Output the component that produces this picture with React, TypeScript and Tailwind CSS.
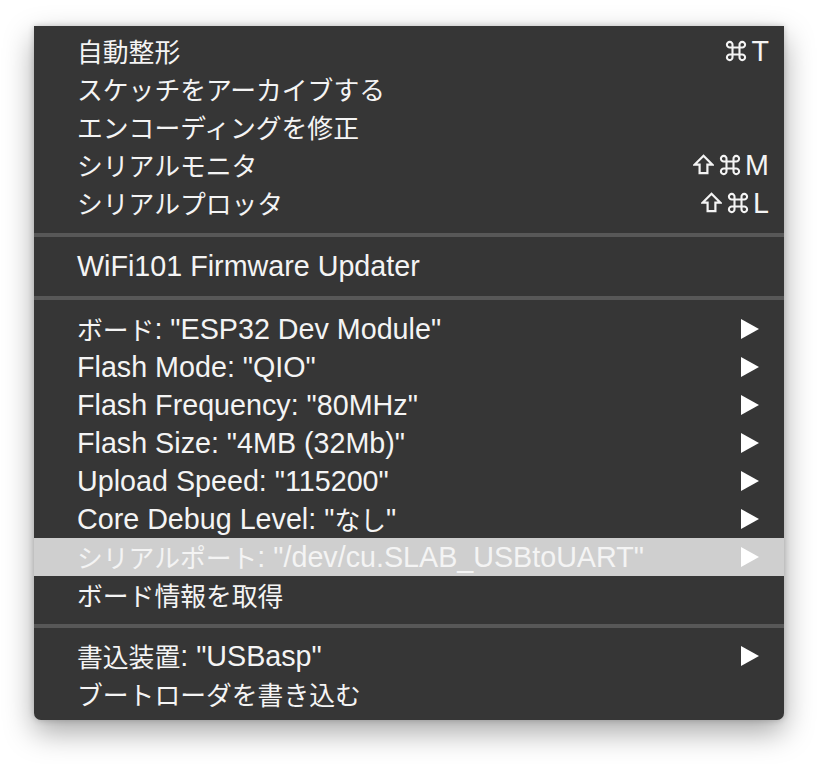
import React from "react";

const LAT = "font-['Liberation_Sans',Arial,sans-serif] text-[28.7px]";
const JP = "font-['Noto_Sans_CJK_JP',sans-serif] text-[25.8px]";

type Seg = { t: string; j?: boolean };
type Item =
  | { kind: "sep"; h: string }
  | { kind: "item"; segs: Seg[]; shortcut?: string; arrow?: boolean; hl?: boolean };

const j = (t: string): Seg => ({ t, j: true });
const l = (t: string): Seg => ({ t });

const items: Item[] = [
  { kind: "item", segs: [j("自動整形")], shortcut: "⌘T" },
  { kind: "item", segs: [j("スケッチをアーカイブする")] },
  { kind: "item", segs: [j("エンコーディングを修正")] },
  { kind: "item", segs: [j("シリアルモニタ")], shortcut: "⇧⌘M" },
  { kind: "item", segs: [j("シリアルプロッタ")], shortcut: "⇧⌘L" },
  { kind: "sep", h: "h-[25px]" },
  { kind: "item", segs: [l("WiFi101 Firmware Updater")] },
  { kind: "sep", h: "h-[25px]" },
  { kind: "item", segs: [j("ボード"), l(': "ESP32 Dev Module"')], arrow: true },
  { kind: "item", segs: [l('Flash Mode: "QIO"')], arrow: true },
  { kind: "item", segs: [l('Flash Frequency: "80MHz"')], arrow: true },
  { kind: "item", segs: [l('Flash Size: "4MB (32Mb)"')], arrow: true },
  { kind: "item", segs: [l('Upload Speed: "115200"')], arrow: true },
  { kind: "item", segs: [l('Core Debug Level: "'), j("なし"), l('"')], arrow: true },
  { kind: "item", segs: [j("シリアルポート"), l(': "/dev/cu.SLAB_USBtoUART"')], arrow: true, hl: true },
  { kind: "item", segs: [j("ボード情報を取得")] },
  { kind: "sep", h: "h-[23px]" },
  { kind: "item", segs: [j("書込装置"), l(': "USBasp"')], arrow: true },
  { kind: "item", segs: [j("ブートローダを書き込む")] },
];

function Arrow() {
  return (
    <svg width="18" height="20" viewBox="0 0 18 20" className="block">
      <polygon points="0,0 18,10 0,20" fill="#ffffff" />
    </svg>
  );
}

function ShiftIcon() {
  return (
    <svg width="21" height="21" viewBox="0 0 21 21" className="block mr-[5px]">
      <path
        d="M10.5 1.8 L19.2 10.6 L14.4 10.6 L14.4 19.2 L6.6 19.2 L6.6 10.6 L1.8 10.6 Z"
        fill="none"
        stroke="#f4f4f4"
        strokeWidth="2.2"
        strokeLinejoin="miter"
      />
    </svg>
  );
}

function CmdIcon() {
  return (
    <svg width="22" height="22" viewBox="0 0 22 22" className="block mr-[4px]">
      <path
        d="M7.5 7.5 L14.5 7.5 L14.5 14.5 L7.5 14.5 Z M7.5 7.5 L7.5 5 A2.8 2.8 0 1 0 5 7.5 L7.5 7.5 M14.5 7.5 L17 7.5 A2.8 2.8 0 1 0 14.5 5 L14.5 7.5 M14.5 14.5 L14.5 17 A2.8 2.8 0 1 0 17 14.5 L14.5 14.5 M7.5 14.5 L5 14.5 A2.8 2.8 0 1 0 7.5 17 L7.5 14.5"
        fill="none"
        stroke="#f4f4f4"
        strokeWidth="2.1"
      />
    </svg>
  );
}

function Shortcut({ s }: { s: string }) {
  return (
    <span className="flex items-center">
      {Array.from(s).map((c, i) =>
        c === "⌘" ? (
          <CmdIcon key={i} />
        ) : c === "⇧" ? (
          <ShiftIcon key={i} />
        ) : (
          <span key={i} className={`${LAT} leading-none`}>
            {c}
          </span>
        )
      )}
    </span>
  );
}

export default function App() {
  return (
    <div className="w-[818px] h-[764px] bg-white pt-[26px] pl-[34px]">
      <div className="w-[750px] bg-[#363636] rounded-b-[7px] pt-[6px] pb-[7px] shadow-[0_12px_30px_rgba(0,0,0,0.35),0_0_6px_rgba(0,0,0,0.2)]">
        {items.map((it, i) =>
          it.kind === "sep" ? (
            <div key={i} className={`${it.h} flex items-center`}>
              <div className="w-full h-[4px] bg-[#585858]" />
            </div>
          ) : (
            <div
              key={i}
              className={`h-[38px] flex items-center pl-[43px] ${
                it.hl ? "bg-[#cfcfcf]" : ""
              } text-[#f4f4f4]`}
            >
              <div className="flex-1 flex items-center whitespace-pre leading-none">
                {it.segs.map((s, k) => (
                  <span key={k} className={s.j ? JP : LAT}>
                    {s.t}
                  </span>
                ))}
              </div>
              {it.shortcut && (
                <div className="pr-[15px]">
                  <Shortcut s={it.shortcut} />
                </div>
              )}
              {it.arrow && (
                <div className="pr-[25px]">
                  <Arrow />
                </div>
              )}
            </div>
          )
        )}
      </div>
    </div>
  );
}
